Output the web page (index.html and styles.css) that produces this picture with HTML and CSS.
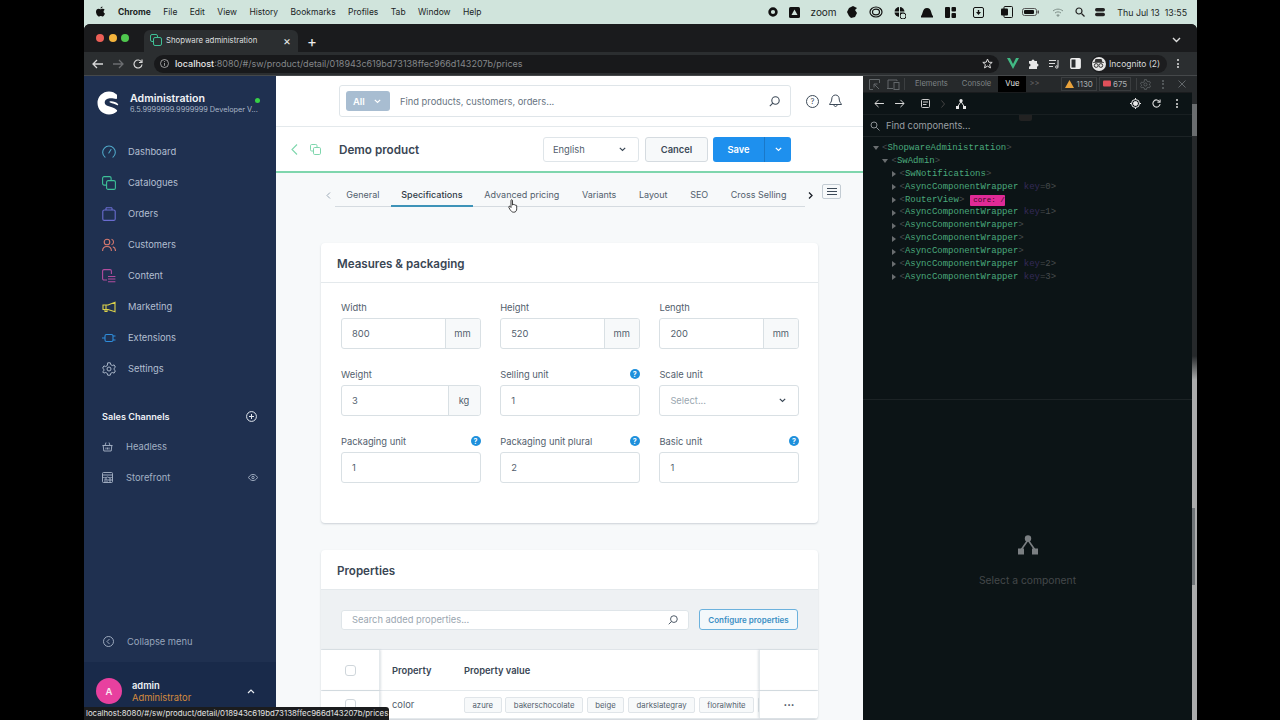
FILE: index.html
```html
<!DOCTYPE html>
<html lang="en">
<head>
<meta charset="utf-8">
<title>Shopware administration</title>
<link rel="stylesheet" href="styles.css">
</head>
<body>
<div class="desktop">
  <header class="menubar">
    <svg class="apple" width="9" height="11" viewBox="0 0 18 22"><path d="M13 1c.2 2-1.700 4.300-4 4C8.800 3 10.900 1.100 13 1zM9 6.500c1 0 2.500-1.300 4.500-1.200 1.800.1 3 .9 3.800 2-3.300 2-2.700 6.500.7 7.800-.9 2.400-2.800 6-4.800 6-1.400 0-2-1-3.600-1s-2.300 1-3.600 1C3.500 21 0 15.500 0 11.500 0 7.700 2.500 5.400 5 5.400c1.700 0 3 1.100 4 1.100z" fill="#111"/></svg>
    <nav class="menu">
      <b>Chrome</b><span>File</span><span>Edit</span><span>View</span><span>History</span><span>Bookmarks</span><span>Profiles</span><span>Tab</span><span>Window</span><span>Help</span>
    </nav>
    <div class="status">
      <svg width="10" height="10" viewBox="0 0 10 10"><circle cx="5" cy="5" r="3.400" fill="none" stroke="#111" stroke-width="2.600"/></svg>
      <svg width="11" height="11" viewBox="0 0 11 11"><rect width="11" height="11" rx="1.500" fill="#111"/><path d="M5.500 2.500 8.500 8h-6z" fill="#d0e4dc"/></svg>
      <span class="zoomword">zoom</span>
      <svg width="11" height="12" viewBox="0 0 11 12"><path d="M6 0 10 2 8 4l2 3-2 4-4 1-2-2-2-4 2-4z" fill="#111"/></svg>
      <svg width="14" height="12" viewBox="0 0 14 12"><ellipse cx="7" cy="6" rx="6" ry="5" fill="none" stroke="#111" stroke-width="1.200"/><ellipse cx="7" cy="6" rx="3.500" ry="2.800" fill="none" stroke="#111" stroke-width="1.200"/></svg>
      <svg width="12" height="13" viewBox="0 0 12 13"><circle cx="5.500" cy="6" r="5" fill="#111"/><circle cx="9" cy="10" r="3" fill="#d0e4dc" stroke="#111"/><path d="M5.500 0v12M0 6h11" stroke="#d0e4dc"/></svg>
      <svg class="st-bell" width="14" height="11" viewBox="0 0 14 11"><path d="M1 9c2-1 1-8 6-8s4 7 6 8v1.500H1z" fill="#111"/></svg>
      <svg width="11" height="11" viewBox="0 0 11 11"><rect width="5" height="11" rx="1" fill="#111"/><rect x="6.500" width="4.500" height="4.500" rx="1" fill="#111"/><rect x="6.500" y="6" width="4.500" height="5" rx="1" fill="#111"/></svg>
      <svg class="st-dl" width="11" height="11" viewBox="0 0 11 11"><rect x=".5" y=".5" width="10" height="10" rx="1.500" fill="none" stroke="#111"/><path d="M3 5h1.800V3h1.400v2H8L5.500 8z" fill="#111"/></svg>
      <svg class="st-xl" width="12" height="12" viewBox="0 0 12 12"><rect x="3" y=".5" width="8.500" height="11" rx="1" fill="none" stroke="#111"/><rect y="2.500" width="7" height="7" rx="1" fill="#111"/></svg>
      <svg class="st-batt" width="17" height="8" viewBox="0 0 17 8"><rect x=".5" y=".5" width="14" height="7" rx="2" fill="none" stroke="#555"/><rect x="2" y="2" width="10" height="4" rx="1" fill="#111"/><rect x="15.500" y="2.500" width="1.500" height="3" fill="#555"/></svg>
      <svg class="st-wifi" width="12" height="9" viewBox="0 0 12 9"><path d="M1 3c3-2.500 7-2.500 10 0M3 5c2-1.500 4-1.500 6 0M6 8.500l1.200-1.500H4.800z" fill="none" stroke="#7f8f89"/></svg>
      <svg class="st-search" width="10" height="10" viewBox="0 0 10 10"><circle cx="4" cy="4" r="3" fill="none" stroke="#222" stroke-width="1.200"/><path d="M6.500 6.500 9.500 9.500" stroke="#222" stroke-width="1.200"/></svg>
      <svg class="st-ctrl" width="10" height="10" viewBox="0 0 10 10"><rect y="1" width="10" height="3.500" rx="1.700" fill="#222"/><rect y="5.800" width="10" height="3.500" rx="1.700" fill="#222"/></svg>
      <time class="clock"><span>Thu Jul 13</span><span>13:55</span></time>
    </div>
  </header>

  <div class="window">
    <div class="titlebar">
      <div class="lights"><i class="red"></i><i class="amber"></i><i class="green"></i></div>
      <div class="tab">
        <svg width="12" height="12" viewBox="0 0 12 12" fill="none" stroke="#3fbf95"><rect x=".5" y=".5" width="7" height="7" rx="1.500"/><rect x="3.500" y="3.500" width="8" height="8" rx="1.500" fill="#2b2e30"/></svg>
        <span class="tabname">Shopware administration</span>
        <span class="tabclose">×</span>
      </div>
      <span class="newtab">+</span>
      <svg class="tabsearch" width="9" height="6" viewBox="0 0 9 6"><path d="M1 1l3.500 3.500L8 1" fill="none" stroke="#ddd" stroke-width="1.400"/></svg>
    </div>

    <div class="toolbar">
      <svg width="11" height="10" viewBox="0 0 11 10" fill="none" stroke="#d8d8d8" stroke-width="1.300"><path d="M11 5H1M5 1 1 5l4 4"/></svg>
      <svg width="11" height="10" viewBox="0 0 11 10" fill="none" stroke="#6c6e70" stroke-width="1.300"><path d="M0 5h10M6 1l4 4-4 4"/></svg>
      <svg width="10" height="10" viewBox="0 0 10 10" fill="none" stroke="#d8d8d8" stroke-width="1.200"><path d="M8.500 3A4 4 0 1 0 9 5.500"/><path d="M9 .5V3.500H6" /></svg>
      <div class="omnibox">
        <svg width="9" height="9" viewBox="0 0 9 9" fill="none" stroke="#bbb" stroke-width=".8"><circle cx="4.500" cy="4.500" r="4"/><path d="M4.500 4v2.800M4.500 2.200v.9"/></svg>
        <span class="url"><b>localhost</b>:8080/#/sw/product/detail/018943c619bd73138ffec966d143207b/prices</span>
        <svg class="star" width="11" height="11" viewBox="0 0 11 11"><path d="M5.500 1 6.800 4.200l3.400.2-2.600 2.200.9 3.300-3-1.800-3 1.800.9-3.300L.8 4.400l3.400-.2z" fill="none" stroke="#ddd"/></svg>
      </div>
      <svg class="tool-v" width="12" height="11" viewBox="0 0 12 11"><path d="M0 0h3l3 6 3-6h3L6 11z" fill="#41b883"/></svg>
      <svg width="11" height="11" viewBox="0 0 11 11"><path d="M1 3h2.500a1.500 1.500 0 1 1 3 0H9v2.500a1.500 1.500 0 1 1 0 3V11H1V8.500a1.500 1.500 0 1 0 0-3z" fill="#e6e6e6"/></svg>
      <svg width="11" height="10" viewBox="0 0 11 10" fill="none" stroke="#ddd"><path d="M0 1.500h7M0 4.500h6M0 7.500h4M9 1v6.500"/><circle cx="7.800" cy="8" r="1.200"/></svg>
      <svg width="11" height="11" viewBox="0 0 11 11"><rect x=".8" y=".8" width="9.400" height="9.400" rx="1" fill="none" stroke="#eee" stroke-width="1.400"/><rect x="5.500" y="1" width="4.500" height="9" fill="#eee"/></svg>
      <div class="profile">
        <span class="spy"><svg width="11" height="9" viewBox="0 0 11 9"><path d="M2.500 0h6l1 3H11v.8H0V3h1.500z" fill="#333"/><circle cx="3.200" cy="6.500" r="1.900" fill="none" stroke="#333"/><circle cx="7.800" cy="6.500" r="1.900" fill="none" stroke="#333"/></svg></span>
        <span>Incognito (2)</span>
      </div>
      <span class="kebab"><i></i><i></i><i></i></span>
    </div>

    <div class="app">
      <aside class="sidebar">
        <div class="brand">
          <svg class="logo" width="24" height="24" viewBox="0 0 24 24"><path d="M20 3.800A11.800 11.800 0 0 0 12 .5 11.500 11.500 0 0 0 .5 12c0 6.400 5.100 11.500 11.500 11.500 3 0 5.800-1.100 7.800-3 .4-.4.400-1.200 0-1.600-2.300-2.400-5.800-2.900-8.800-3.900-1.800-.6-3.300-1.500-3.300-3.500 0-3 3.400-4.300 6-4.300 2 0 4 .5 5.600.9.600.2.900-1.400.7-2.300z" fill="#fff"/><path d="M13.200 10.200c2.700-.3 6 .8 7.800 2.700.4.500.1 1.500-.5 1.400-2.300-1.200-5-1.800-7.400-2.700-.9-.4-.9-1.300.1-1.400z" fill="#fff"/></svg>
          <div class="brandtext">
            <strong>Administration</strong>
            <small>6.5.9999999.9999999 Developer V...</small>
          </div>
          <i class="online"></i>
        </div>
        <nav class="mainnav">
          <a class="navitem"><svg width="14" height="14" viewBox="0 0 14 14" fill="none" stroke="#4fa6c6" stroke-width="1.100" stroke-linecap="round"><path d="M3 12.200A6.300 6.300 0 1 1 11 12.200"/><path d="M6.800 8 9 4.500"/></svg><span>Dashboard</span></a>
          <a class="navitem"><svg width="14" height="14" viewBox="0 0 14 14" fill="none" stroke="#3dc098" stroke-width="1.100"><rect x=".6" y=".6" width="8.500" height="8.500" rx="1.500"/><rect x="4.600" y="4.600" width="8.800" height="8.800" rx="1.500" fill="#1f3050"/></svg><span>Catalogues</span></a>
          <a class="navitem"><svg width="14" height="14" viewBox="0 0 14 14" fill="none" stroke="#6a6cd0" stroke-width="1.100"><rect x=".8" y="3" width="12.400" height="10.400" rx="1.500"/><path d="M4 3V.8M10 3V.8M4 .8h6"/></svg><span>Orders</span></a>
          <a class="navitem"><svg width="14" height="14" viewBox="0 0 14 14" fill="none" stroke="#d6796f" stroke-width="1.100"><circle cx="5" cy="4" r="2.800"/><path d="M.6 13c0-3 2-4.500 4.400-4.500S9.400 10 9.400 13M9.500 1.300a2.800 2.800 0 0 1 0 5.400M10.800 8.800c1.600.5 2.700 2 2.700 4.200"/></svg><span>Customers</span></a>
          <a class="navitem"><svg width="14" height="14" viewBox="0 0 14 14" fill="none" stroke="#b24c9e" stroke-width="1.100"><path d="M5 11H2a1.400 1.400 0 0 1-1.400-1.400V2A1.400 1.400 0 0 1 2 .6h6A1.400 1.400 0 0 1 9.400 2v3"/><path d="M6 7.500h7.400M6 10h7.400M6 12.800h7.400"/></svg><span>Content</span></a>
          <a class="navitem"><svg width="14" height="14" viewBox="0 0 14 14" fill="none" stroke="#dcd24a" stroke-width="1.100"><path d="M13 2.200v9.600L6 9.500H1V5h5z"/><path d="M4 5v4.500M3 9.500v2h2v-2"/></svg><span>Marketing</span></a>
          <a class="navitem"><svg width="14" height="14" viewBox="0 0 14 14" fill="none" stroke="#2f8ddb" stroke-width="1.100"><rect x="3" y="3.500" width="8" height="7" rx="1.500"/><path d="M0 7h3M11 5h2.500M11 9h2.500"/></svg><span>Extensions</span></a>
          <a class="navitem"><svg width="14" height="14" viewBox="0 0 14 14" fill="none" stroke="#a9b6c8" stroke-width="1"><path d="M5.700.8h2.600l.4 1.800 1.600.9 1.800-.6 1.300 2.300-1.400 1.200v1.200l1.400 1.200-1.300 2.300-1.800-.6-1.600.9-.4 1.800H5.700l-.4-1.800-1.600-.9-1.800.6L.6 9.800 2 8.600V7.400L.6 6.200l1.300-2.300 1.800.6 1.600-.9z"/><circle cx="7" cy="7" r="2"/></svg><span>Settings</span></a>
        </nav>
        <section class="channels">
          <h3><span>Sales Channels</span><svg width="11" height="11" viewBox="0 0 11 11" fill="none" stroke="#e4e9f0"><circle cx="5.500" cy="5.500" r="4.900"/><path d="M5.500 3v5M3 5.500h5"/></svg></h3>
          <a class="channel"><svg width="11" height="11" viewBox="0 0 11 11" fill="none" stroke="#a9b6c8" stroke-width=".9"><path d="M.5 4.500h10M1.200 4.500l.6 5.500h7.400l.6-5.500M3 4.500 4 1.500M8 4.500 7 1.500M4 6.500v2M5.500 6.500v2M7 6.500v2"/></svg><span>Headless</span></a>
          <a class="channel"><svg width="11" height="11" viewBox="0 0 11 11" fill="none" stroke="#a9b6c8" stroke-width=".9"><rect x=".5" y=".5" width="10" height="10" rx="1"/><path d="M.5 3h10M.5 5c1.500 1 3 1 5 0 2 1 3.500 1 5 0M3 10.500V7h2v3.500M7 7h2v2H7z"/></svg><span>Storefront</span><svg class="eye" width="10" height="7" viewBox="0 0 10 7" fill="none" stroke="#a9b6c8" stroke-width=".9"><path d="M.5 3.500C2 1 3.500.5 5 .5s3 .5 4.500 3C8 6 6.500 6.500 5 6.500S2 6 .5 3.500z"/><circle cx="5" cy="3.500" r="1.200"/></svg></a>
        </section>
        <a class="collapse"><svg width="11" height="11" viewBox="0 0 11 11" fill="none" stroke="#a9b6c8" stroke-width=".9"><circle cx="5.500" cy="5.500" r="5"/><path d="M6.500 3 4 5.500 6.500 8"/></svg><span>Collapse menu</span></a>
        <footer class="userbar">
          <span class="avatar">A</span>
          <div class="who"><strong>admin</strong><small>Administrator</small></div>
          <svg width="8" height="5" viewBox="0 0 8 5"><path d="M1 4l3-3 3 3" fill="none" stroke="#e8ecf2" stroke-width="1.200"/></svg>
        </footer>
      </aside>

      <main class="page">
        <div class="searchbar">
          <div class="globalsearch">
            <span class="allbtn">All <svg width="7" height="5" viewBox="0 0 7 5"><path d="M.8.8l2.700 2.700L6.200.8" fill="none" stroke="#fff" stroke-width="1.200"/></svg></span>
            <span class="searchph">Find products, customers, orders...</span>
            <svg width="11" height="11" viewBox="0 0 11 11" fill="none" stroke="#3d4a58" stroke-width="1.100"><circle cx="6.500" cy="4.500" r="3.700"/><path d="M3.800 7.200.8 10.200"/></svg>
          </div>
          <svg class="helpicon" width="13" height="13" viewBox="0 0 13 13" fill="none" stroke="#3d4a58"><circle cx="6.500" cy="6.500" r="6"/><text x="6.500" y="9.200" font-size="7.500" text-anchor="middle" fill="#3d4a58" stroke="none" font-family="Inter">?</text></svg>
          <svg width="13" height="14" viewBox="0 0 13 14" fill="none" stroke="#3d4a58"><path d="M6.500 1C4 1 2.800 3 2.800 5c0 3-1.800 4-2.300 5.500h12C12 9 10.200 8 10.200 5c0-2-1.200-4-3.700-4zM5 11c0 2 3 2 3 0"/></svg>
        </div>
        <div class="smartbar">
          <svg width="7" height="11" viewBox="0 0 7 11"><path d="M6 .5 1 5.500l5 5" fill="none" stroke="#7fd6ad" stroke-width="1.100"/></svg>
          <svg class="prodicon" width="11" height="11" viewBox="0 0 11 11" fill="none" stroke="#7fd6ad"><rect x=".5" y=".5" width="6.500" height="6.500" rx="1.200"/><rect x="3.500" y="3.500" width="7" height="7" rx="1.200" fill="#fff"/></svg>
          <h1>Demo product</h1>
          <div class="langselect"><span>English</span><svg width="7" height="5" viewBox="0 0 7 5"><path d="M.8.8l2.700 2.700L6.200.8" fill="none" stroke="#3d4a58" stroke-width="1.200"/></svg></div>
          <button class="cancel">Cancel</button>
          <div class="savegroup"><button class="save">Save</button><button class="savearrow"><svg width="7" height="5" viewBox="0 0 7 5"><path d="M.8.8l2.700 2.700L6.200.8" fill="none" stroke="#fff" stroke-width="1.200"/></svg></button></div>
        </div>
        <div class="content">
          <div class="tabsrow">
            <svg class="tabarrow" width="5" height="7" viewBox="0 0 5 7"><path d="M4 .5 1 3.500l3 3" fill="none" stroke="#9aa8b5"/></svg>
            <nav class="tabs">
              <a>General</a><a class="active">Specifications</a><a>Advanced pricing</a><a>Variants</a><a>Layout</a><a>SEO</a><a>Cross Selling</a>
            </nav>
            <svg class="tabarrow" width="5" height="7" viewBox="0 0 5 7"><path d="M1 .5l3 3-3 3" fill="none" stroke="#1a1f26" stroke-width="1.300"/></svg>
            <span class="menubtn"><i></i><i></i><i></i></span>
          </div>

          <section class="card">
            <h2>Measures &amp; packaging</h2>
            <div class="formgrid">
              <div class="field"><label>Width</label><div class="input"><span>800</span><em>mm</em></div></div>
              <div class="field"><label>Height</label><div class="input"><span>520</span><em>mm</em></div></div>
              <div class="field"><label>Length</label><div class="input"><span>200</span><em>mm</em></div></div>
              <div class="field"><label>Weight</label><div class="input"><span>3</span><em class="short">kg</em></div></div>
              <div class="field"><label>Selling unit<i class="hint">?</i></label><div class="input"><span>1</span></div></div>
              <div class="field"><label>Scale unit</label><div class="input"><span class="ph">Select...</span><svg class="selarrow" width="7" height="5" viewBox="0 0 7 5"><path d="M.8.8l2.700 2.700L6.200.8" fill="none" stroke="#3d4a58" stroke-width="1.200"/></svg></div></div>
              <div class="field"><label>Packaging unit<i class="hint">?</i></label><div class="input"><span>1</span></div></div>
              <div class="field"><label>Packaging unit plural<i class="hint">?</i></label><div class="input"><span>2</span></div></div>
              <div class="field"><label>Basic unit<i class="hint">?</i></label><div class="input"><span>1</span></div></div>
            </div>
          </section>

          <section class="card props">
            <h2>Properties</h2>
            <div class="propbar">
              <div class="propsearch"><span>Search added properties...</span><svg width="10" height="10" viewBox="0 0 11 11" fill="none" stroke="#3d4a58"><circle cx="6.500" cy="4.500" r="3.700"/><path d="M3.800 7.200.8 10.200"/></svg></div>
              <button class="config">Configure properties</button>
            </div>
            <div class="tablehead">
              <div class="cellcheck"><i class="check"></i></div>
              <div class="cellmain"><b class="colprop">Property</b><b>Property value</b></div>
              <div class="cellact"></div>
            </div>
            <div class="tablerow">
              <div class="cellcheck"><i class="check"></i></div>
              <div class="cellmain"><span class="colprop">color</span><div class="chips"><span>azure</span><span>bakerschocolate</span><span>beige</span><span>darkslategray</span><span>floralwhite</span><i class="chipend"></i></div></div>
              <div class="cellact"><span class="dots">···</span></div>
            </div>
          </section>
        </div>
      </main>

      <aside class="devtools">
        <div class="dt-tabs">
          <svg width="11" height="11" viewBox="0 0 11 11" fill="none" stroke="#62676a"><path d="M4 10.500H.5V.5h10V4M5 5l5 5M5 5v3.500M5 5h3.500"/></svg>
          <svg class="dt-device" width="13" height="11" viewBox="0 0 13 11" fill="none" stroke="#62676a"><path d="M1 9V1h9v1M0 9.500h6"/><rect x="7" y="3.500" width="5" height="7"/></svg>
          <i class="dt-sep"></i>
          <a>Elements</a><a>Console</a><a class="on">Vue</a><a class="more">&gt;&gt;</a>
          <span class="count warn"><svg width="9" height="8" viewBox="0 0 9 8"><path d="M4.500 0 9 8H0z" fill="#e9a23b"/></svg>1130</span>
          <span class="count err"><svg width="8" height="8" viewBox="0 0 8 8"><rect y=".5" width="8" height="6" rx="1" fill="#e0505a"/></svg>675</span>
          <i class="dt-sep"></i>
          <svg class="dt-gear" width="11" height="11" viewBox="0 0 14 14" fill="none" stroke="#62676a"><path d="M5.700.8h2.600l.4 1.800 1.600.9 1.800-.6 1.300 2.300-1.400 1.200v1.200l1.400 1.200-1.300 2.300-1.800-.6-1.600.9-.4 1.800H5.700l-.4-1.800-1.600-.9-1.800.6L.6 9.800 2 8.600V7.400L.6 6.200l1.300-2.300 1.800.6 1.600-.9z"/><circle cx="7" cy="7" r="2"/></svg>
          <span class="kebab dim"><i></i><i></i><i></i></span>
          <svg width="8" height="8" viewBox="0 0 8 8"><path d="M.5.5l7 7M7.500.5l-7 7" stroke="#62676a"/></svg>
        </div>
        <div class="dt-nav">
          <svg width="10" height="9" viewBox="0 0 11 10" fill="none" stroke="#ddd" stroke-width="1.100"><path d="M11 5H1M5 1 1 5l4 4"/></svg>
          <svg width="10" height="9" viewBox="0 0 11 10" fill="none" stroke="#ddd" stroke-width="1.100"><path d="M0 5h10M6 1l4 4-4 4"/></svg>
          <svg class="dt-panel" width="9" height="9" viewBox="0 0 9 9" fill="none" stroke="#ccc"><rect x=".5" y=".5" width="8" height="8" rx="1"/><path d="M2 3h5M2 5.500h3.500"/></svg>
          <svg width="4" height="8" viewBox="0 0 4 8"><path d="M.5.5l3 3.500-3 3.500" fill="none" stroke="#444"/></svg>
          <svg class="dt-comp" width="10" height="10" viewBox="0 0 10 10" fill="#e8e8e8"><circle cx="5" cy="1.800" r="1.700"/><rect y="7" width="3" height="3"/><rect x="7" y="7" width="3" height="3"/><path d="M5 2.500 1.500 8M5 2.500 8.500 8" stroke="#e8e8e8"/></svg>
          <svg class="dt-target" width="11" height="11" viewBox="0 0 11 11" fill="none" stroke="#e8e8e8"><circle cx="5.500" cy="5.500" r="4"/><circle cx="5.500" cy="5.500" r="2" fill="#e8e8e8"/><path d="M5.500 0v1.500M5.500 9.500V11M0 5.500h1.500M9.500 5.500H11"/></svg>
          <svg width="9" height="9" viewBox="0 0 10 10" fill="none" stroke="#ddd" stroke-width="1.200"><path d="M8.500 3A4 4 0 1 0 9 5.500"/><path d="M9 .5V3.500H6"/></svg>
          <span class="kebab light"><i></i><i></i><i></i></span>
        </div>
        <div class="dt-find">
          <svg width="10" height="10" viewBox="0 0 10 10" fill="none" stroke="#8b9093"><circle cx="4" cy="4" r="3"/><path d="M6.300 6.300 9.500 9.500"/></svg>
          <span>Find components...</span>
          <i class="dt-drop"></i>
        </div>
        <div class="dt-tree">
          <div class="node l0"><i class="tri open"></i><u>&lt;</u>ShopwareAdministration<u>&gt;</u></div>
          <div class="node l1"><i class="tri open"></i><u>&lt;</u>SwAdmin<u>&gt;</u></div>
          <div class="node l2"><i class="tri"></i><u>&lt;</u>SwNotifications<u>&gt;</u></div>
          <div class="node l2"><i class="tri"></i><u>&lt;</u>AsyncComponentWrapper <s>key</s><u>=0&gt;</u></div>
          <div class="node l2"><i class="tri"></i><u>&lt;</u>RouterView<u>&gt;</u><mark>core: /</mark></div>
          <div class="node l2"><i class="tri"></i><u>&lt;</u>AsyncComponentWrapper <s>key</s><u>=1&gt;</u></div>
          <div class="node l2"><i class="tri"></i><u>&lt;</u>AsyncComponentWrapper<u>&gt;</u></div>
          <div class="node l2"><i class="tri"></i><u>&lt;</u>AsyncComponentWrapper<u>&gt;</u></div>
          <div class="node l2"><i class="tri"></i><u>&lt;</u>AsyncComponentWrapper<u>&gt;</u></div>
          <div class="node l2"><i class="tri"></i><u>&lt;</u>AsyncComponentWrapper <s>key</s><u>=2&gt;</u></div>
          <div class="node l2"><i class="tri"></i><u>&lt;</u>AsyncComponentWrapper <s>key</s><u>=3&gt;</u></div>
        </div>
        <div class="dt-empty">
          <svg width="20" height="20" viewBox="0 0 20 20" fill="#7b7f82"><circle cx="10" cy="3.500" r="3.200"/><rect y="13.500" width="6" height="6"/><rect x="14" y="13.500" width="6" height="6"/><path d="M10 5 3 15M10 5l7 10" stroke="#7b7f82" stroke-width="1.600"/></svg>
          <span>Select a component</span>
        </div>
      </aside>
      <div class="bezel"><i></i></div>
    </div>
    <div class="statusbubble">localhost:8080/#/sw/product/detail/018943c619bd73138ffec966d143207b/prices</div>
    <svg class="cursor" width="11" height="14" viewBox="0 0 11 14"><path d="M3 1c.6-.6 1.400-.2 1.500.5V6l.6-.5c.5-.3 1 0 1.100.4.500-.4 1.200-.2 1.300.4.500-.3 1.200 0 1.200.6v3c0 1.800-1 3.300-2.700 3.300H5.500C4 13.200 3 12 2 10.500L.8 8.300c-.3-.7.500-1.400 1.100-.9L3 8.500V1.500z" fill="#fff" stroke="#111" stroke-width=".8"/></svg>
  </div>
</div>
</body>
</html>
```

FILE: styles.css
```css
* { box-sizing: border-box; }
html, body { margin: 0; height: 100%; }
body { background: #000; font-family: Inter, "Liberation Sans", sans-serif; overflow: hidden; }
a { display: block; }
button { font-family: inherit; margin: 0; cursor: default; }
h1, h2, h3 { margin: 0; }
svg { flex: none; }

.desktop { width: 1113px; height: 720px; margin-left: 84px; display: flex; flex-direction: column; background: #d0e4dc; }

.menubar { height: 24px; flex: none; display: flex; align-items: center; padding-left: 12px; font-size: 8.5px; color: #1b1f1f; }
.apple { margin-top: -2px; }
.menu { display: flex; gap: 12.4px; margin-left: 13px; }
.menu b { font-weight: 700; }
.status { margin-left: auto; display: flex; align-items: center; gap: 11px; padding-right: 10px; }
.zoomword { font-size: 10px; letter-spacing: -.1px; }
.st-bell { margin-left: 3px; }
.st-dl { margin-left: 6px; }
.st-xl { margin-left: 5.5px; }
.st-batt { margin-left: -1.5px; }
.st-wifi { margin-left: 2px; }
.st-ctrl { margin-left: -1px; }
.clock { display: flex; gap: 5px; font-size: 8.8px; margin-left: 1px; }

.window { flex: 1; min-height: 0; position: relative; background: #1c1d1f; border-radius: 6px 6px 0 0; display: flex; flex-direction: column; overflow: hidden; }

.titlebar { height: 28px; flex: none; display: flex; align-items: flex-end; padding-left: 60px; position: relative; background: #1a1b1d; }
.lights { position: absolute; left: 12px; top: 10px; display: flex; gap: 4.5px; }
.lights i { width: 8px; height: 8px; border-radius: 50%; }
.red { background: #ec5f57; } .amber { background: #f4b43c; } .green { background: #4fc74e; }
.tab { width: 154px; height: 22px; background: #2b2e30; border-radius: 6px 6px 0 0; display: flex; align-items: center; padding: 0 7px 2px 6px; color: #dcdedf; font-size: 7.8px; }
.tabname { margin-left: 4px; flex: 1; }
.tabclose { font-size: 12px; color: #e6e6e6; }
.newtab { width: 26px; height: 22px; display: flex; align-items: center; justify-content: center; color: #eee; font-size: 15px; margin-left: 1px; }
.tabsearch { margin: 0 16px 9px auto; }

.toolbar { height: 23px; flex: none; background: #2b2e30; display: flex; align-items: center; gap: 9.7px; padding: 0 16px 0 8px; }
.omnibox { width: 845px; flex: none; height: 18px; background: #18191b; border-radius: 9px; margin-left: 1px; margin-right: -2px; display: flex; align-items: center; padding: 0 6px; }
.url { margin-left: 6px; color: #84878a; font-size: 9px; white-space: nowrap; flex: 1; }
.url b { color: #e8e8e8; font-weight: 500; }
.profile { height: 18px; flex: none; display: flex; align-items: center; gap: 3.5px; background: #1c1d1f; border-radius: 9px; color: #d8dadb; font-size: 8.5px; padding: 0 6px 0 1px; width: 76px; white-space: nowrap; }
.spy { width: 14px; height: 14px; border-radius: 50%; background: #e6e6e6; display: flex; align-items: center; justify-content: center; flex: none; }
.kebab { display: inline-flex; flex-direction: column; gap: 1.5px; margin-left: 1px; }
.kebab i { width: 2px; height: 2px; background: #e0e0e0; border-radius: 50%; }
.kebab.dim i { background: #62676a; }

.app { flex: 1; min-height: 0; display: flex; border-top: 1px solid #45484a; }

.sidebar { width: 192px; flex: none; background: #1f3050; display: flex; flex-direction: column; color: #b3bfd0; }
.brand { height: 54px; flex: none; display: flex; align-items: center; padding: 0 16px 0 13px; }
.brandtext { margin-left: 9px; flex: 1; min-width: 0; display: flex; flex-direction: column; }
.brandtext strong { font-size: 10.6px; line-height: 13px; color: #f2f4f7; font-weight: 600; }
.brandtext small { font-size: 7.3px; line-height: 9px; color: #aab6c7; white-space: nowrap; }
.online { width: 5px; height: 5px; border-radius: 50%; background: #37d046; margin-top: -6px; flex: none; }
.mainnav { padding-top: 6px; }
.navitem { height: 31px; display: flex; align-items: center; padding-left: 18px; font-size: 9.33px; gap: 12px; }
.channels { padding: 25px 18px 0; }
.channels h3 { display: flex; justify-content: space-between; align-items: center; height: 14px; color: #eef1f5; font-size: 9.1px; font-weight: 600; padding-right: 1px; }
.channel { height: 31px; display: flex; align-items: center; gap: 13px; font-size: 9.33px; color: #a3b0c4; }
.channel:first-of-type { margin-top: 8px; }
.eye { margin-left: auto; }
.collapse { margin-top: auto; margin-bottom: 15px; padding-left: 19px; display: flex; align-items: center; gap: 13px; font-size: 9.33px; color: #97a5bb; height: 12px; }
.userbar { height: 58px; flex: none; background: #192a4a; display: flex; align-items: center; padding: 0 21px 0 12px; }
.avatar { width: 26px; height: 26px; border-radius: 50%; background: #e8409f; color: #f8e7f1; display: flex; align-items: center; justify-content: center; font-size: 9.5px; font-weight: 600; flex: none; }
.who { flex: 1; margin-left: 10px; display: flex; flex-direction: column; margin-top: 1px; }
.who strong { font-size: 9.33px; line-height: 12px; color: #eef1f5; font-weight: 600; }
.who small { font-size: 9.33px; line-height: 12px; color: #d58a3e; }

.page { width: 587px; flex: none; background: #f7f9fa; overflow: hidden; display: flex; flex-direction: column; }
.searchbar { height: 51px; flex: none; background: #fff; border-bottom: 1px solid #e4e9ec; display: flex; align-items: center; padding: 0 21px 0 63px; }
.globalsearch { width: 452px; height: 32px; background: #fff; border: 1px solid #dfe5e9; border-radius: 3px; display: flex; align-items: center; padding: 0 10px 0 6px; font-size: 9.33px; }
.allbtn { width: 44px; height: 20px; background: #a8bdd1; color: #fff; border-radius: 3px; display: flex; align-items: center; justify-content: space-between; padding: 0 9px 0 7px; font-weight: 600; }
.searchph { flex: 1; margin-left: 10px; color: #68747f; }
.helpicon { margin: 0 10px 0 15px; }
.smartbar { height: 46px; flex: none; background: #fff; border-bottom: 2px solid #7fd6ad; display: flex; align-items: center; padding-left: 15px; }
.prodicon { margin-left: 12px; }
.smartbar h1 { font-size: 11.7px; font-weight: 600; color: #3a4654; width: 204px; margin-left: 18px; padding-top: 2px; }
.langselect { width: 96px; height: 25px; background: #fff; border: 1px solid #dfe5e9; border-radius: 3px; display: flex; align-items: center; justify-content: space-between; padding: 0 12px 0 9px; font-size: 9.33px; color: #52606d; }
.cancel { width: 63px; height: 25px; margin-left: 6px; background: #f7f9fa; border: 1px solid #d5dbe0; border-radius: 3px; font-size: 9.33px; font-weight: 600; color: #3d4a58; }
.savegroup { display: flex; margin-left: 5px; }
.save { width: 52px; height: 25px; background: #1e90ee; border: 0; border-right: 1px solid #1a78c8; border-radius: 3px 0 0 3px; color: #fff; font-size: 9.33px; font-weight: 600; }
.savearrow { width: 26px; height: 25px; background: #1e90ee; border: 0; border-radius: 0 3px 3px 0; display: flex; align-items: center; justify-content: center; padding: 0; }

.content { flex: 1; min-height: 0; overflow: hidden; padding: 0 45px; }
.tabsrow { height: 70px; display: flex; align-items: flex-start; margin: 0 -45px; padding: 11px 22px 0 50px; }
.tabarrow { margin-top: 8px; }
.tabs { display: flex; flex: 1; height: 23px; margin-left: 4px; margin-right: 3px; border-bottom: 1px solid #d5dbe0; font-size: 9px; color: #52606d; }
.tabs a { padding: 0 11.3px; line-height: 22px; height: 23px; white-space: nowrap; }
.tabs a.active { color: #2f3a46; border-bottom: 2px solid #3e93b8; padding: 0 10.5px; font-weight: 500; }
.menubtn { width: 19px; height: 15px; margin-left: 9px; border: 1px solid #c3ccd3; border-radius: 2px; background: #f7f9fa; display: flex; flex-direction: column; align-items: center; justify-content: center; gap: 2px; flex: none; }
.menubtn i { width: 10px; height: 1px; background: #3d4a58; }

.card { width: 497px; background: #fff; border-radius: 4px; box-shadow: 0 1px 2px rgba(120,135,150,.35); margin-bottom: 27px; }
.card h2 { height: 40px; display: flex; align-items: center; padding: 2px 0 0 16px; font-size: 11.6px; font-weight: 600; color: #3a4654; border-bottom: 1px solid #e4e9ec; }
.formgrid { display: grid; grid-template-columns: repeat(3, 139.5px); column-gap: 19.7px; row-gap: 16px; padding: 15px 18px 40px 20px; }
.field label { display: flex; justify-content: space-between; align-items: center; height: 18px; font-size: 9.33px; color: #52606d; margin-bottom: 2px; }
.hint { width: 10px; height: 10px; border-radius: 50%; background: #1e90dc; color: #fff; font-style: normal; font-size: 7px; font-weight: 700; display: flex; align-items: center; justify-content: center; }
.input { height: 31px; display: flex; align-items: stretch; background: #fff; border: 1px solid #d9e0e4; border-radius: 3px; font-size: 9.33px; color: #52606d; overflow: hidden; }
.input span { flex: 1; display: flex; align-items: center; padding-left: 10px; }
.input em { width: 35px; font-style: normal; display: flex; align-items: center; justify-content: center; background: #f7f9fa; border-left: 1px solid #d9e0e4; }
.input em.short { width: 32px; }
.input .ph { color: #9aa6b0; }
.selarrow { align-self: center; margin-right: 12px; }
.props { overflow: hidden; }
.propbar { height: 60px; background: #eef1f3; border-bottom: 1px solid #e0e5e9; display: flex; align-items: center; padding: 0 20px; gap: 10px; }
.propsearch { width: 348px; height: 20px; background: #fff; border: 1px solid #dfe5e9; border-radius: 3px; display: flex; align-items: center; justify-content: space-between; padding: 0 10px; font-size: 9.33px; color: #9aa6b0; }
.config { width: 99px; height: 21px; background: #f3f8fb; border: 1px solid #6cb2dd; border-radius: 3px; color: #3a8fc4; font-size: 8px; font-weight: 600; padding: 0; }
.tablehead, .tablerow { display: flex; }
.tablehead { height: 41px; border-bottom: 1px solid #e4e9ec; }
.tablerow { height: 28px; border-bottom: 1px solid #e4e9ec; }
.cellcheck { width: 59px; flex: none; display: flex; align-items: center; justify-content: center; border-right: 1px solid #e4e9ec; box-shadow: 1px 0 2px rgba(120,135,150,.25); }
.check { width: 11px; height: 11px; border: 1px solid #cfd6db; border-radius: 3px; background: #fff; }
.cellmain { flex: 1; min-width: 0; overflow: hidden; display: flex; align-items: center; padding-left: 12px; font-size: 9.33px; color: #52606d; }
.cellmain b { font-weight: 600; color: #3a4654; }
.colprop { width: 72px; flex: none; }
.chips { display: flex; gap: 3.8px; font-size: 7.75px; white-space: nowrap; }
.chips span { height: 16px; padding: 0 7.5px; display: flex; align-items: center; background: #f7f9fa; border: 1px solid #e0e5e9; border-radius: 2px; }
.chipend { width: 30px; height: 16px; background: #f7f9fa; border: 1px solid #e0e5e9; border-radius: 2px; flex: none; }
.cellact { width: 59px; flex: none; display: flex; align-items: center; justify-content: center; border-left: 1px solid #e4e9ec; box-shadow: -1px 0 2px rgba(120,135,150,.25); }
.dots { font-size: 11px; font-weight: 700; color: #3d4a58; }

.devtools { width: 329px; flex: none; background: #0c1416; display: flex; flex-direction: column; color: #8b9093; }
.dt-tabs { height: 17px; flex: none; background: #26292b; display: flex; align-items: center; padding: 0 7px 0 6px; font-size: 7.6px; color: #7e8386; border-bottom: 1px solid #1a1c1e; }
.dt-device { margin-left: 7px; }
.dt-sep { width: 1px; height: 12px; background: #3c3f41; margin: 0 3px 0 4px; flex: none; }
.count + .dt-sep { margin-left: 3px; }
.dt-tabs a { padding: 0 7px; line-height: 16px; flex: none; }
.dt-tabs a.on { background: #000; color: #e4e4e4; }
.dt-tabs a.more { padding: 0 0 0 3px; color: #666; width: 35px; }
.count { height: 14px; flex: none; display: flex; align-items: center; gap: 2px; padding: 0 3px; border: 1px solid #3a3d3f; color: #a9adb0; font-size: 8px; margin-right: 2px; }
.dt-gear { margin-right: 11px; }
.dt-tabs .kebab { margin: 0 14px 0 0; flex: none; }
.dt-nav { height: 22px; flex: none; display: flex; align-items: center; padding: 0 14px 0 11px; gap: 10.5px; border-bottom: 1px solid #181f21; }
.dt-panel { margin-left: 6px; }
.dt-comp { margin-left: 1px; }
.dt-target { margin-left: auto; }
.kebab.light { margin-left: 5px; }
.dt-find { height: 22px; flex: none; display: flex; align-items: center; gap: 6px; padding-left: 7px; font-size: 9.33px; color: #9a9fa2; border-bottom: 1px solid #1c2325; position: relative; }
.dt-drop { position: absolute; left: 156px; top: 0; width: 13px; height: 6px; background: #222; border-radius: 0 0 2px 2px; }
.dt-tree { height: 263px; flex: none; padding-top: 5px; border-bottom: 1px solid #1c2325; font-family: "Liberation Mono", monospace; font-size: 9px; color: #4aa97c; }
.node { height: 12.9px; line-height: 12.9px; display: flex; align-items: center; white-space: pre; }
.node u { text-decoration: none; color: #474b4d; }
.node s { text-decoration: none; color: #352a58; }
.l0 { padding-left: 9.5px; } .l1 { padding-left: 19px; } .l2 { padding-left: 29px; }
.tri { width: 0; height: 0; margin-right: 3.5px; flex: none; border-left: 4.5px solid #6a6e70; border-top: 3px solid transparent; border-bottom: 3px solid transparent; }
.tri.open { border-top: 4.5px solid #6a6e70; border-left: 3px solid transparent; border-right: 3px solid transparent; border-bottom: 0; }
.node mark { margin-left: 6px; height: 11px; line-height: 11px; padding: 0 3px; background: #e02a96; color: #3a0a26; font-size: 7.5px; border-radius: 1px; width: 35px; flex: none; }
.dt-empty { flex: 1; display: flex; flex-direction: column; align-items: center; justify-content: center; gap: 19px; font-size: 10.3px; color: #44484a; }
.bezel { width: 5px; flex: 1; background: linear-gradient(#26292b 0 28px, #6a6d6f 28px 60px, #26292b 60px 280px, #abacac 304px); position: relative; }
.bezel i { position: absolute; left: 0; top: 432px; width: 3px; height: 77px; background: #707578; }

.statusbubble { position: absolute; left: 0; bottom: 0; height: 13px; width: 305px; padding: 0 2px; background: #1b1c1e; color: #e4e4e4; font-size: 7.85px; line-height: 13px; white-space: nowrap; border-radius: 0 3px 0 0; overflow: hidden; }
.cursor { position: absolute; left: 424px; top: 175px; }
```
